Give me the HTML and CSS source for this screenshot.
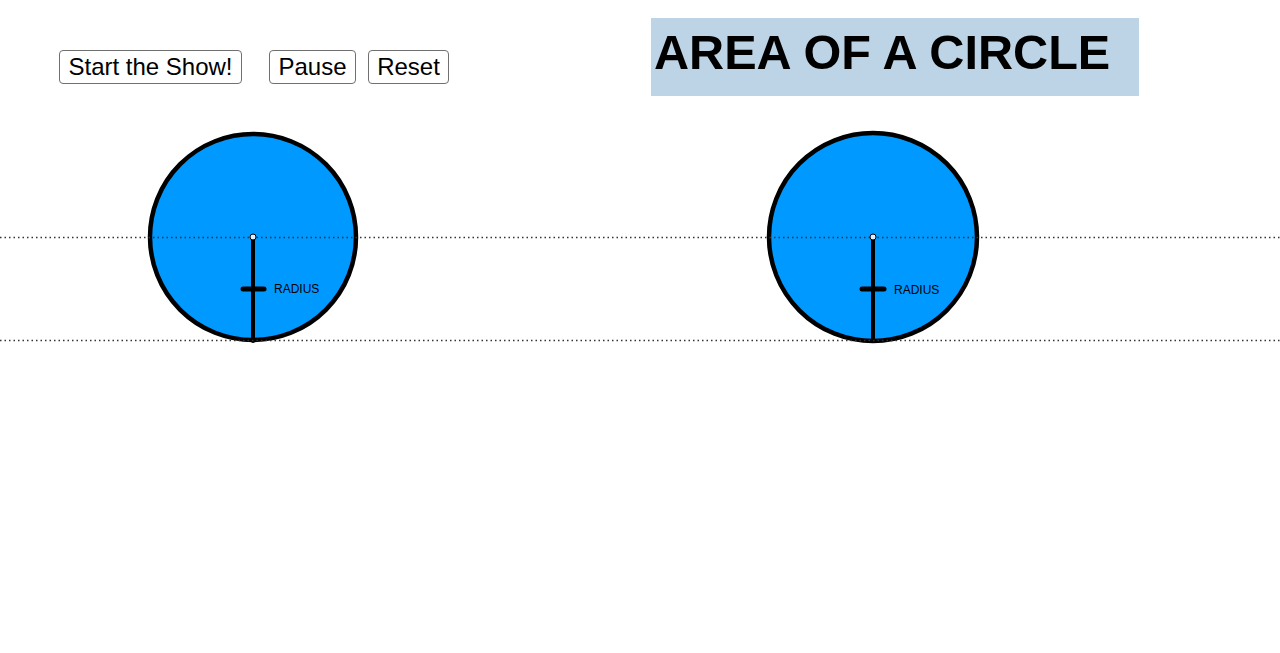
FILE: index.html
```html
<!DOCTYPE html>
<html>
<head>
<meta charset="utf-8">
<link rel="stylesheet" href="styles.css">
</head>
<body>
<div class="stage">
  <svg class="canvas" width="1280" height="653" viewBox="0 0 1280 653">
    <g>
      <circle cx="253" cy="237" r="103" class="disc"/>
      <line x1="253" y1="240" x2="253" y2="341" class="rad"/>
      <line x1="243" y1="289" x2="264" y2="289" class="tick"/>
      <text x="274" y="293" class="lbl">RADIUS</text>
    </g>
    <g>
      <circle cx="873" cy="237" r="104" class="disc"/>
      <line x1="873" y1="240" x2="873" y2="341" class="rad"/>
      <line x1="862" y1="289" x2="884" y2="289" class="tick"/>
      <text x="894" y="294" class="lbl">RADIUS</text>
    </g>
    <line x1="0" y1="237.5" x2="1280" y2="237.5" class="dots"/>
    <line x1="0" y1="340.5" x2="1280" y2="340.5" class="dots"/>
    <circle cx="253" cy="237" r="3" class="pt"/>
    <circle cx="873" cy="237" r="3" class="pt"/>
  </svg>
  <header class="top">
    <div class="controls">
      <button class="btn btn-start">Start the Show!</button>
      <button class="btn btn-pause">Pause</button>
      <button class="btn btn-reset">Reset</button>
    </div>
    <h1 class="title">AREA OF A CIRCLE</h1>
  </header>
</div>
</body>
</html>
```

FILE: styles.css
```css
html, body {
  margin: 0;
  padding: 0;
  background: #ffffff;
}
.stage {
  position: relative;
  width: 1280px;
  height: 653px;
  overflow: hidden;
  font-family: "Liberation Sans", Arial, sans-serif;
}
.canvas {
  position: absolute;
  left: 0;
  top: 0;
}
.top {
  position: relative;
  display: flex;
  align-items: flex-start;
}
.controls {
  display: flex;
  margin-top: 50px;
  margin-left: 59px;
  gap: 12px;
}
.btn {
  font-family: "Liberation Sans", Arial, sans-serif;
  font-size: 24px;
  height: 34px;
  padding: 0;
  border: 1px solid #707070;
  border-radius: 4px;
  background: #ffffff;
  color: #000;
  line-height: 32px;
  box-sizing: border-box;
  text-align: center;
}
.btn-start {
  width: 183px;
  margin-right: 15px;
}
.btn-pause {
  width: 87px;
}
.btn-reset {
  width: 81px;
}
.title {
  margin: 18px 0 0 202px;
  width: 488px;
  height: 78px;
  box-sizing: border-box;
  padding: 7px 0 0 3px;
  background: #bdd4e7;
  font-size: 48.6px;
  font-weight: bold;
  color: #000;
  line-height: 55px;
  white-space: nowrap;
}
.dots {
  stroke: #333;
  stroke-width: 1.5;
  stroke-dasharray: 1.5 3;
}
.disc {
  fill: #0099ff;
  stroke: #000;
  stroke-width: 4.5;
}
.rad {
  stroke: #000;
  stroke-width: 4;
  stroke-linecap: round;
}
.tick {
  stroke: #000;
  stroke-width: 5;
  stroke-linecap: round;
}
.pt {
  fill: #dfefff;
  stroke: #000;
  stroke-width: 1;
}
.lbl {
  font-family: "Liberation Sans", Arial, sans-serif;
  font-size: 12px;
  fill: #000;
}
```
